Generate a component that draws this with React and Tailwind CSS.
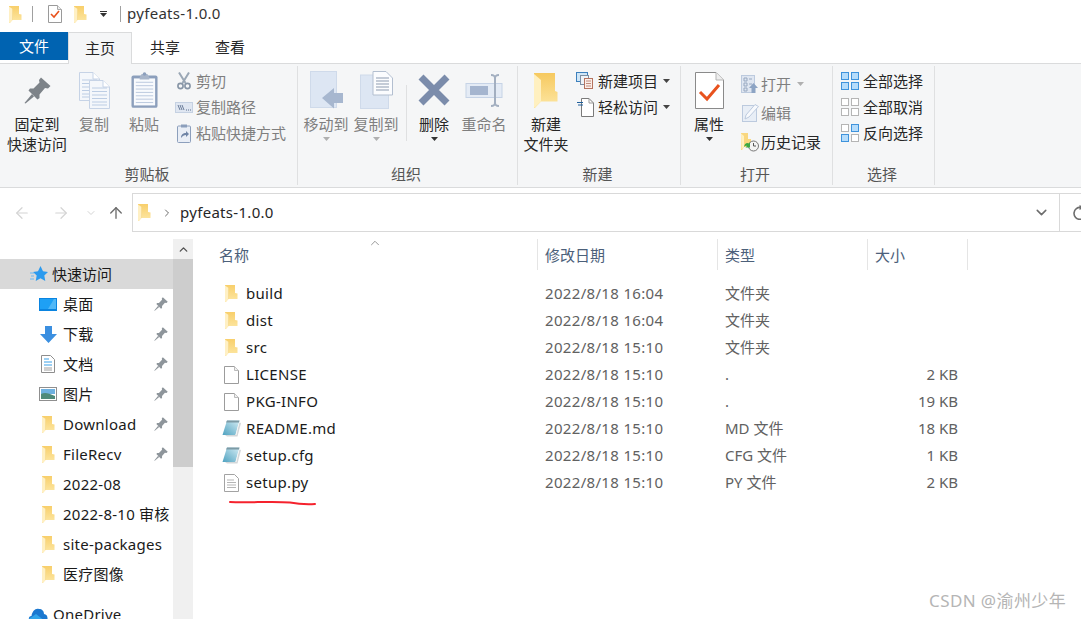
import { ChevronDown, ChevronUp, ChevronRight, ArrowLeft, ArrowRight, ArrowUp } from 'lucide-react';

const Folder = ({ w = 13, h = 17 }) => (
  <svg width={w} height={h} viewBox="0 0 13 17" className="shrink-0">
    <defs>
      <linearGradient id="fold" x1="0" y1="0" x2="0" y2="1">
        <stop offset="0" stopColor="#f8cf6b" />
        <stop offset="1" stopColor="#fde8a6" />
      </linearGradient>
    </defs>
    <path d="M0 0H10V8L12.5 8.5V14H3.5L1 17H0Z" fill="url(#fold)" />
    <path d="M0 0.5L3.5 3V14L1 16.5H0Z" fill="#fff0c4" />
    <path d="M3.5 3V14" stroke="#f3d68a" strokeWidth="0.6" />
  </svg>
);

const BigFolder = () => (
  <svg width="24" height="35" viewBox="0 0 24 35">
    <defs>
      <linearGradient id="bigf" x1="0" y1="0" x2="0" y2="1">
        <stop offset="0" stopColor="#f6c95f" />
        <stop offset="1" stopColor="#fde7a4" />
      </linearGradient>
    </defs>
    <path d="M0 0H21V18L23.5 19V28.5H7L1 35H0Z" fill="url(#bigf)" />
    <path d="M0 1L7 7V28.5L1 34H0Z" fill="#fff0c0" />
  </svg>
);

const Pin = ({ s = 14, c = '#8e959b' }) => (
  <svg width={s} height={s} viewBox="0 0 27 27" className="shrink-0">
    <path d="M17 0.5L26.5 9L24 11.5L21 11L15.5 17.5L15.5 21L13.5 22.5L4.5 13.5L6 11.5L9.5 11.5L15.5 5.5L15 3Z" fill={c} />
    <path d="M8 17L0.5 26L1.5 26.5L10 19.5Z" fill={c} />
  </svg>
);

const Sheet = ({ x, y }) => (
  <g transform={`translate(${x} ${y})`}>
    <path d="M0.5 0.5H14L20.5 7V28.5H0.5Z" fill="#f4f7fb" stroke="#c6d3e6" />
    <path d="M14 0.5V7H20.5" fill="#fff" stroke="#c6d3e6" />
    <path d="M3 8H18M3 11.5H18M3 15H18M3 18.5H18M3 22H18M3 25H18" stroke="#bccde4" />
  </g>
);

const CopyIcon = () => (
  <svg width="31" height="37" viewBox="0 0 31 37"><Sheet x={0} y={0} /><Sheet x={10} y={8} /></svg>
);

const PasteIcon = () => (
  <svg width="27" height="38" viewBox="0 0 28 38">
    <rect x="0.5" y="4" width="27" height="33.5" rx="2" fill="#8c9fbc" />
    <rect x="3" y="7" width="22" height="28" fill="#f8fafd" />
    <path d="M5 11H23M5 14.5H23M5 18H23M5 21.5H23M5 25H23M5 28.5H23M5 32H23" stroke="#b9c8de" />
    <path d="M9 6L11 2.5H17L19 6V8H9Z" fill="#a8b5c9" />
    <circle cx="14" cy="2.5" r="1.8" fill="#8c9fbc" />
  </svg>
);

const Scissors = () => (
  <svg width="14" height="18" viewBox="0 0 14 18">
    <path d="M2 0.5L8.5 11M12 0.5L5.5 11" stroke="#9aa7b5" strokeWidth="2" fill="none" />
    <circle cx="3.5" cy="14" r="2.6" fill="none" stroke="#8795a6" strokeWidth="1.6" />
    <circle cx="10.5" cy="14" r="2.6" fill="none" stroke="#8795a6" strokeWidth="1.6" />
  </svg>
);

const PathIcon = () => (
  <svg width="18" height="11" viewBox="0 0 18 11">
    <rect x="0.5" y="0.5" width="17" height="10" fill="#dfe6f1" stroke="#c5d1e2" />
    <path d="M3 3L5 8M5 3L7 8M7 3L9 8" stroke="#5d7190" strokeWidth="0.9" />
    <path d="M11 8H12M13 8H14M15 8H16" stroke="#5d7190" />
  </svg>
);

const ShortcutIcon = () => (
  <svg width="14" height="19" viewBox="0 0 14 19">
    <rect x="0.5" y="2" width="13" height="16.5" rx="1" fill="#e9eef6" stroke="#8c9fbc" />
    <rect x="4" y="0.5" width="6" height="3" fill="#8c9fbc" />
    <path d="M4 14C4 10.5 6 9 9 9V7L12 10L9 13V11C7 11 5.5 12 4 14Z" fill="#6f84a6" />
  </svg>
);

const MoveIcon = () => (
  <svg width="33" height="38" viewBox="0 0 33 38">
    <rect x="0.5" y="0.5" width="26" height="36" fill="#dde6f3" stroke="#cfdaea" />
    <path d="M12 27L24 17V22H33V32H24V37.5Z" fill="#a7b7cf" />
  </svg>
);

const CopyToIcon = () => (
  <svg width="33" height="38" viewBox="0 0 33 38">
    <rect x="0.5" y="4" width="28" height="33.5" fill="#dde6f3" stroke="#cfdaea" />
    <path d="M13 0.5H26L32.5 7V24H13Z" fill="#fbfcfe" stroke="#b3bfd0" />
    <path d="M16 7H29M16 10H29M16 13H29M16 16H29M16 19H29" stroke="#8d9bb0" />
  </svg>
);

const DeleteIcon = () => (
  <svg width="32" height="32" viewBox="0 0 32 32">
    <path d="M3 3L29 29M29 3L3 29" stroke="#7b8cab" strokeWidth="7" />
  </svg>
);

const RenameIcon = () => (
  <svg width="38" height="33" viewBox="0 0 38 33">
    <rect x="1" y="9.5" width="36" height="14" fill="#e4ebf5" stroke="#c6d3e6" />
    <rect x="5" y="12" width="18" height="9" fill="#a5b5cf" />
    <path d="M26 1C30 1 30 3 30 5V28C30 30 30 32 26 32M34 1C30 1 30 3 30 5M34 32C30 32 30 30 30 28" stroke="#a3afc0" strokeWidth="2" fill="none" />
  </svg>
);

const NewItemIcon = () => (
  <svg width="18" height="18" viewBox="0 0 18 18">
    <rect x="0.5" y="0.5" width="11" height="9" fill="#cfe6f7" stroke="#3d80bd" />
    <rect x="4.5" y="3.5" width="8" height="9" fill="#eef3f8" stroke="#7d8fa3" />
    <rect x="8.5" y="6.5" width="8" height="10" fill="#fbeee9" stroke="#b5735f" />
    <path d="M10 9H15M10 11.5H15M10 14H15" stroke="#c08c7c" />
  </svg>
);

const EasyIcon = () => (
  <svg width="17" height="19" viewBox="0 0 17 19">
    <path d="M4.5 0.5H12L16.5 5V18.5H4.5Z" fill="#fff" stroke="#7a7a7a" />
    <path d="M12 0.5V5H16.5" fill="none" stroke="#9a9a9a" />
    <path d="M0 4.5H6M1 7H6" stroke="#1f5f9c" strokeWidth="1" />
  </svg>
);

const PropsIcon = () => (
  <svg width="29" height="37" viewBox="0 0 29 37">
    <path d="M0.5 0.5H21L28.5 8V36.5H0.5Z" fill="#fff" stroke="#8a8a8a" />
    <path d="M21 0.5V8H28.5" fill="#eee" stroke="#b5b5b5" />
    <path d="M5 20L12 27L24 13" fill="none" stroke="#e8521d" strokeWidth="3" />
  </svg>
);

const OpenIcon = () => (
  <svg width="18" height="18" viewBox="0 0 18 18">
    <rect x="0.5" y="0.5" width="13" height="17" fill="#dfe6f1" stroke="#bccade" />
    <path d="M3 3H6V6H3ZM3 8H6V11H3ZM3 13H6V16H3ZM8 4H11M8 9H11" stroke="#97a8c0" fill="none" />
    <path d="M8 13L12.5 8L17 13H14.5V18H10.5V13Z" fill="#8da4c4" />
  </svg>
);

const EditIcon = () => (
  <svg width="17" height="18" viewBox="0 0 17 18">
    <rect x="0.5" y="1.5" width="14" height="16" fill="#e8eef6" stroke="#bccade" />
    <path d="M3 15L4 11L13 0.5L16.5 2.5L7 13Z" fill="#f7f9fc" stroke="#bccade" />
  </svg>
);

const HistoryIcon = () => (
  <svg width="18" height="19" viewBox="0 0 18 19">
    <path d="M0 0H7V6H10V14H3L1 17H0Z" fill="#f9d77f" />
    <path d="M0 0.5L3 3V14L0.5 16.5Z" fill="#fff0c0" />
    <circle cx="12.5" cy="13" r="5" fill="#f4f4f4" stroke="#777" />
    <path d="M12.5 10V13H15" stroke="#555" fill="none" />
    <path d="M3 14C3.5 10.5 6 9 8 10.5L9 9V14.5H4.5L6 13C5 12.5 4 13 3 14Z" fill="#3aa843" />
  </svg>
);

// 4 square selection icon, filled squares depend on the action
const SelIcon = ({ on }) => (
  <svg width="18" height="18" viewBox="0 0 18 18">
    {[[0, 0], [10, 0], [0, 10], [10, 10]].map(([x, y], i) => (
      <rect key={i} x={x + 0.5} y={y + 0.5} width="7" height="7"
        fill={on[i] ? '#b5dcfb' : '#fff'} stroke={on[i] ? '#3f93dc' : '#b5b5b5'} />
    ))}
  </svg>
);

const TinyDoc = () => (
  <svg width="14" height="18" viewBox="0 0 14 18">
    <path d="M0.5 0.5H9.5L13.5 4.5V17.5H0.5Z" fill="#fff" stroke="#9a9a9a" />
    <path d="M9.5 0.5V4.5H13.5" fill="#eee" stroke="#aaa" />
    <path d="M3 9L6 12L11 6" fill="none" stroke="#e8521d" strokeWidth="1.6" />
  </svg>
);

const Caret = ({ c = '#444', className = '' }) => (
  <svg width="7" height="4" viewBox="0 0 7 4" className={className}><path d="M0 0H7L3.5 4Z" fill={c} /></svg>
);

const StarIcon = () => (
  <svg width="18" height="16" viewBox="0 0 18 16">
    <path d="M10.5 0L13 5.2L18 6L14.3 9.6L15.3 15L10.5 12.3L5.7 15L6.7 9.6L3 6L8 5.2Z" fill="#2b9aee" />
    <path d="M0 7H4M1 10H4M0 13H4" stroke="#6bb8f2" />
  </svg>
);

const DesktopIcon = () => (
  <svg width="18" height="13" viewBox="0 0 18 13">
    <rect width="18" height="13" fill="#0a84e0" />
    <rect x="1" y="1" width="16" height="10" fill="#1ea0f5" />
    <path d="M9 11L15 1H17V11Z" fill="#52b8f7" />
  </svg>
);

const DownIcon = () => (
  <svg width="17" height="17" viewBox="0 0 17 17">
    <path d="M5 0H12V8H17L8.5 17L0 8H5Z" fill="#3b8fe0" />
  </svg>
);

const DocsIcon = () => (
  <svg width="14" height="18" viewBox="0 0 14 18">
    <path d="M0.5 0.5H9.5L13.5 4.5V17.5H0.5Z" fill="#fff" stroke="#8e8e8e" />
    <path d="M3 4H8M3 7H11M3 10H11" stroke="#3aa1e8" />
    <path d="M3 13H11M3 15H11" stroke="#a0a0a0" />
  </svg>
);

const PicsIcon = () => (
  <svg width="18" height="14" viewBox="0 0 18 14">
    <rect x="0.5" y="0.5" width="17" height="13" fill="#fff" stroke="#8f8f8f" />
    <rect x="2" y="2" width="14" height="5" fill="#6fb1e0" />
    <path d="M2 7C6 5 9 6 16 9V12H2Z" fill="#4f8a7a" />
  </svg>
);

const CloudIcon = () => (
  <svg width="21" height="14" viewBox="0 0 21 14">
    <path d="M3 14C0 14 0 9 3.5 9C4 4 8 0.5 11 2C14 2 16 4 16 7C20 7 21 14 17 14Z" fill="#1b78d0" />
    <path d="M3 14C1 14 0.5 11 3 10.5L8 7L17 14Z" fill="#32a5ea" />
  </svg>
);

const BlankFile = () => (
  <svg width="15" height="18" viewBox="0 0 15 18">
    <path d="M0.5 0.5H10.5L14.5 4.5V17.5H0.5Z" fill="#fff" stroke="#9c9c9c" />
    <path d="M10.5 0.5V4.5H14.5" fill="#f0f0f0" stroke="#bbb" />
  </svg>
);

const TextFile = () => (
  <svg width="15" height="18" viewBox="0 0 15 18">
    <path d="M0.5 0.5H10.5L14.5 4.5V17.5H0.5Z" fill="#fff" stroke="#a3a3a3" />
    <path d="M3 6H10M3 8.5H12M3 11H12M3 13.5H12" stroke="#b5b5b5" />
  </svg>
);

const NotepadIcon = () => (
  <svg width="19" height="17" viewBox="0 0 19 17">
    <defs>
      <linearGradient id="pad" x1="1" y1="0" x2="0" y2="1">
        <stop offset="0" stopColor="#d5edf5" />
        <stop offset="1" stopColor="#4fa2c0" />
      </linearGradient>
    </defs>
    <path d="M5 0.5H17.5L13.5 15H0.5Z" fill="url(#pad)" />
    <path d="M5 0.5H17.5L17 2.5H4Z" fill="#7d9aa5" />
    <path d="M17.5 2.5L19 3L15.5 16.5H5L3 15H13.5Z" fill="#d4d7d9" />
    <path d="M17 4L14.5 15H13.5L16.5 3.5Z" fill="#f7f7f7" />
  </svg>
);

const SmallBtn = ({ icon, label, dim, box = 'w-[22px]', extra }) => (
  <div className="flex items-center h-[26px]">
    <div className={`${box} flex items-center shrink-0`}>
      <div className="w-[18px] flex justify-center">{icon}</div>
    </div>
    <span className={dim ? 'text-[#7f7f7f]' : 'text-[#262626]'}>{label}</span>
    {extra}
  </div>
);

const BigBtn = ({ icon, lines, dim, w = 'w-[50px]', caret }) => (
  <div className={`${w} flex flex-col items-center shrink-0`}>
    <div className="h-[48px] flex items-center justify-center">{icon}</div>
    {lines.map(l => (
      <div key={l} className={`leading-[20px] whitespace-nowrap ${dim ? 'text-[#7f7f7f]' : 'text-[#262626]'}`}>{l}</div>
    ))}
    {caret && <Caret c={dim ? '#b0b0b0' : '#333'} className="mt-[3px]" />}
  </div>
);

const Group = ({ w, label, children, className = '' }) => (
  <div className={`${w} h-full flex flex-col border-r border-[#dfe0e1] shrink-0`}>
    <div className={`flex-1 flex min-h-0 ${className}`}>{children}</div>
    <div className="h-[20px] leading-[20px] text-center text-[#555] mb-px pr-[3px]">{label}</div>
  </div>
);

const quick = [
  { icon: <DesktopIcon />, name: '桌面', pin: true },
  { icon: <DownIcon />, name: '下载', pin: true },
  { icon: <DocsIcon />, name: '文档', pin: true },
  { icon: <PicsIcon />, name: '图片', pin: true },
  { icon: <Folder />, name: 'Download', pin: true },
  { icon: <Folder />, name: 'FileRecv', pin: true },
  { icon: <Folder />, name: '2022-08' },
  { icon: <Folder />, name: '2022-8-10 审核' },
  { icon: <Folder />, name: 'site-packages' },
  { icon: <Folder />, name: '医疗图像' },
];

const files = [
  { icon: <Folder />, name: 'build', date: '2022/8/18 16:04', type: '文件夹', size: '' },
  { icon: <Folder />, name: 'dist', date: '2022/8/18 16:04', type: '文件夹', size: '' },
  { icon: <Folder />, name: 'src', date: '2022/8/18 15:10', type: '文件夹', size: '' },
  { icon: <BlankFile />, name: 'LICENSE', date: '2022/8/18 15:10', type: '.', size: '2 KB' },
  { icon: <BlankFile />, name: 'PKG-INFO', date: '2022/8/18 15:10', type: '.', size: '19 KB' },
  { icon: <NotepadIcon />, name: 'README.md', date: '2022/8/18 15:10', type: 'MD 文件', size: '18 KB' },
  { icon: <NotepadIcon />, name: 'setup.cfg', date: '2022/8/18 15:10', type: 'CFG 文件', size: '1 KB' },
  { icon: <TextFile />, name: 'setup.py', date: '2022/8/18 15:10', type: 'PY 文件', size: '2 KB' },
];

export default function App() {
  return (
    <div className="relative w-full h-[619px] overflow-hidden bg-white text-[15px] text-[#262626] font-['Noto_Sans','Noto_Sans_CJK_SC',sans-serif]">
      {/* Title bar */}
      <div className="h-[32px] pb-[4px] flex items-center">
        <div className="w-[32px] pl-[9px]"><Folder /></div>
        <div className="w-px h-[16px] bg-[#a0a0a0]" />
        <div className="ml-[15px]"><TinyDoc /></div>
        <div className="ml-[12px]"><Folder /></div>
        <div className="ml-[12px] w-[8px] flex flex-col items-center gap-[1px]">
          <div className="w-[7px] h-px bg-[#333]" />
          <Caret c="#333" />
        </div>
        <div className="ml-[13px] w-px h-[16px] bg-[#a0a0a0]" />
        <div className="ml-[6px] -mt-[2px] text-[#333] tracking-[0.3px]">pyfeats-1.0.0</div>
      </div>

      {/* Tabs */}
      <div className="h-[32px] flex border-b border-[#dadbdc]">
        <div className="w-[68px] h-[28px] pt-[1px] bg-[#0063b1] text-white flex items-center justify-center">文件</div>
        <div className="w-[64px] h-[32px] bg-[#f5f6f7] border-x border-t border-[#dadbdc] flex items-center justify-center">主页</div>
        <div className="w-[66px] h-[30px] flex items-center justify-center">共享</div>
        <div className="w-[64px] h-[30px] flex items-center justify-center">查看</div>
      </div>

      {/* Ribbon */}
      <div className="h-[124px] bg-[#f5f6f7] border-b border-[#dadbdc] flex pt-[2px] pb-[2px]">
        <Group w="w-[298px]" label="剪贴板" className="pl-[7px]">
          <BigBtn w="w-[60px]" icon={<Pin s={27} c="#7d8389" />} lines={['固定到', '快速访问']} />
          <div className="w-[7px]" />
          <BigBtn w="w-[40px]" dim icon={<CopyIcon />} lines={['复制']} />
          <div className="w-[10px]" />
          <BigBtn w="w-[40px]" dim icon={<PasteIcon />} lines={['粘贴']} />
          <div className="ml-[11px] pt-[2px]">
            <SmallBtn dim box="w-[21px]" icon={<Scissors />} label="剪切" />
            <SmallBtn dim box="w-[21px]" icon={<PathIcon />} label="复制路径" />
            <SmallBtn dim box="w-[21px]" icon={<ShortcutIcon />} label="粘贴快捷方式" />
          </div>
        </Group>
        <Group w="w-[220px]" label="组织" className="pl-[3px]">
          <BigBtn dim caret icon={<MoveIcon />} lines={['移动到']} />
          <BigBtn dim caret icon={<CopyToIcon />} lines={['复制到']} />
          <div className="ml-[5px] mr-[2px] w-px h-[56px] mt-[19px] bg-[#dfe0e1]" />
          <BigBtn caret icon={<DeleteIcon />} lines={['删除']} />
          <BigBtn dim icon={<RenameIcon />} lines={['重命名']} />
        </Group>
        <Group w="w-[163px]" label="新建" className="pl-[3px]">
          <BigBtn icon={<BigFolder />} lines={['新建', '文件夹']} />
          <div className="ml-[5px] pt-[2px]">
            <SmallBtn icon={<NewItemIcon />} label="新建项目" extra={<Caret className="ml-[5px]" />} />
            <SmallBtn icon={<EasyIcon />} label="轻松访问" extra={<Caret className="ml-[5px]" />} />
          </div>
        </Group>
        <Group w="w-[152px]" label="打开" className="pl-[8px]">
          <BigBtn w="w-[40px]" caret icon={<PropsIcon />} lines={['属性']} />
          <div className="ml-[12px] pt-[5px] flex flex-col">
            <div className="h-[29px]"><SmallBtn dim box="w-[20px]" icon={<OpenIcon />} label="打开" extra={<Caret c="#b0b0b0" className="ml-[6px]" />} /></div>
            <div className="h-[29px]"><SmallBtn dim box="w-[20px]" icon={<EditIcon />} label="编辑" /></div>
            <div className="h-[29px]"><SmallBtn box="w-[20px]" icon={<HistoryIcon />} label="历史记录" /></div>
          </div>
        </Group>
        <Group w="w-[102px]" label="选择" className="pl-[8px] pt-[2px] flex-col">
          <SmallBtn icon={<SelIcon on={[1, 1, 1, 1]} />} label="全部选择" />
          <SmallBtn icon={<SelIcon on={[0, 0, 0, 0]} />} label="全部取消" />
          <SmallBtn icon={<SelIcon on={[0, 1, 1, 0]} />} label="反向选择" />
        </Group>
      </div>

      {/* Address row */}
      <div className="h-[44px] pt-[5px] flex">
        <div className="w-[132px] flex items-center text-[#d4d4d4]">
          <ArrowLeft size={18} className="ml-[13px]" strokeWidth={1.6} />
          <ArrowRight size={18} className="ml-[21px]" strokeWidth={1.6} />
          <ChevronDown size={12} className="ml-[15px]" strokeWidth={2} />
          <ArrowUp size={18} className="ml-[10px] text-[#6d6d6d]" strokeWidth={1.8} />
        </div>
        <div className="flex-1 h-[39px] border border-[#d9d9d9] border-r-0 flex items-center">
          <div className="pl-[5px]"><Folder /></div>
          <ChevronRight size={12} className="ml-[10px] text-[#6d6d6d]" />
          <div className="ml-[7px] text-[#262626] tracking-[0.3px]">pyfeats-1.0.0</div>
          <div className="flex-1" />
          <ChevronDown size={17} className="text-[#6d6d6d] mr-[9px]" strokeWidth={2.2} />
          <div className="w-[22px] h-full border-l border-[#d9d9d9] flex items-center pl-[13px]">
            <svg width="14" height="15" viewBox="0 0 14 15" className="shrink-0">
              <path d="M8 2.5A6 6 0 1 0 13 8" fill="none" stroke="#6d6d6d" strokeWidth="1.6" />
              <path d="M6.5 0L11 2.5L6.5 5Z" fill="#6d6d6d" />
            </svg>
          </div>
        </div>
      </div>

      {/* Body */}
      <div className="h-[387px] flex">
        <div className="w-[173px] shrink-0 pt-[27px] overflow-hidden">
          <div className="h-[30px] bg-[#d9d9d9] flex items-center pl-[30px] gap-[4px] text-[#1a1a1a]">
            <StarIcon />
            快速访问
          </div>
          {quick.map(q => (
            <div key={q.name} className="h-[30px] flex items-center text-[#1a1a1a]">
              <div className="w-[63px] pl-[39px] shrink-0">
                <div className="w-[18px] flex justify-center">{q.icon}</div>
              </div>
              <div className="flex-1 whitespace-nowrap overflow-hidden tracking-[0.25px]">{q.name}</div>
              {q.pin && <div className="w-[19px] shrink-0"><Pin /></div>}
            </div>
          ))}
          <div className="mt-[10px] h-[30px] flex items-center pl-[28px] gap-[4px] text-[#1a1a1a] tracking-[0.25px]">
            <CloudIcon />
            OneDrive
          </div>
        </div>

        {/* Scrollbar */}
        <div className="w-[20px] shrink-0 pt-[7px] bg-white flex flex-col">
          <div className="h-[20px] bg-[#f0f0f0] flex items-center justify-center">
            <ChevronUp size={13} className="text-[#505050]" strokeWidth={2.5} />
          </div>
          <div className="h-[208px] bg-[#cdcdcd]" />
          <div className="flex-1 bg-[#f0f0f0]" />
        </div>

        {/* File list */}
        <div className="flex-1 min-w-0 pt-[7px]">
          <div className="relative h-[31px] flex text-[#4c607a]">
            <div className="w-[345px] border-r border-[#e5e5e5] pl-[26px] pt-[5px]">名称</div>
            <div className="w-[180px] border-r border-[#e5e5e5] pl-[7px] pt-[5px]">修改日期</div>
            <div className="w-[150px] border-r border-[#e5e5e5] pl-[7px] pt-[5px]">类型</div>
            <div className="w-[100px] border-r border-[#e5e5e5] pl-[7px] pt-[5px]">大小</div>
            <ChevronUp size={14} className="absolute left-[175px] -top-[3px] text-[#8a8a8a]" strokeWidth={1.5} />
          </div>
          <div className="pt-[10px]">
            {files.map(f => (
              <div key={f.name} className="h-[27px] flex items-center">
                <div className="w-[345px] flex items-center pl-[28px] text-[#1a1a1a] tracking-[0.3px]">
                  <div className="w-[20px] mr-[5px] flex justify-center">{f.icon}</div>
                  {f.name}
                </div>
                <div className="w-[180px] pl-[7px] text-[#616161] tracking-[0.33px]">{f.date}</div>
                <div className="w-[150px] pl-[7px] text-[#616161]">{f.type}</div>
                <div className="w-[100px] pr-[10px] text-right text-[#616161]">{f.size}</div>
              </div>
            ))}
          </div>
        </div>
      </div>

      {/* Hand drawn underline */}
      <svg width="90" height="10" viewBox="0 0 90 10" className="absolute left-[228px] top-[498px]">
        <path d="M2 4C20 5 45 3 62 4.5C70 6 78 6.5 87 6" fill="none" stroke="#f5222d" strokeWidth="2" strokeLinecap="round" />
      </svg>

      {/* Watermark */}
      <div className="absolute left-[929px] top-[588px] text-[17px] tracking-[0.4px] text-[#b5b5b5] whitespace-nowrap">CSDN @渝州少年</div>
    </div>
  );
}
